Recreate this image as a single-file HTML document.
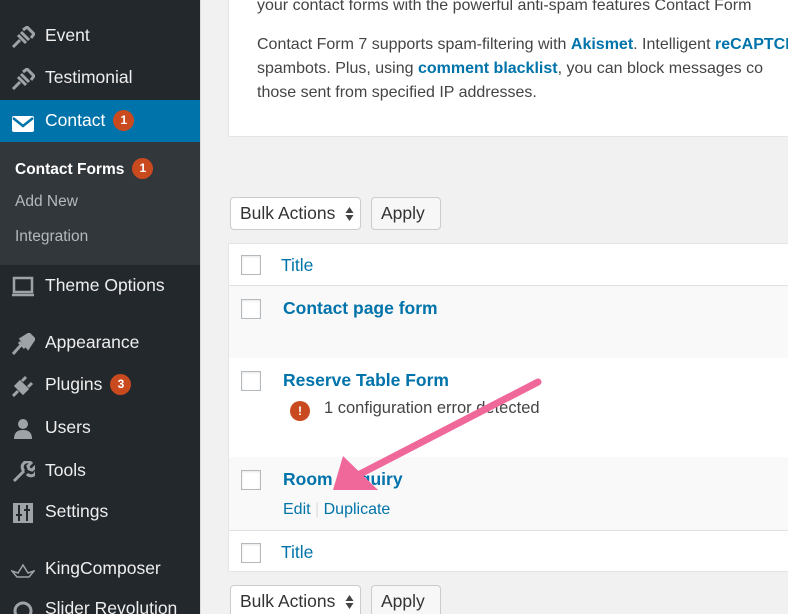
<!DOCTYPE html>
<html><head><style>
*{margin:0;padding:0;box-sizing:border-box}
html,body{width:788px;height:614px;overflow:hidden}
body{background:#f1f1f1;font-family:"Liberation Sans",sans-serif;position:relative}
#sb{position:absolute;left:0;top:0;width:200px;height:614px;background:#23282d;overflow:hidden}
.mi{position:absolute;left:0;width:200px;color:#eee;font-size:17.5px;white-space:nowrap}
.mi .t{position:absolute;left:45px;top:0}
.ic{position:absolute;left:11px;top:1px;width:24px;height:22px}
.badge{display:inline-block;width:21px;height:21px;border-radius:50%;background:#ca4a1f;color:#fff;font-size:12px;text-align:center;line-height:21px;vertical-align:2px;margin-left:8px;font-weight:bold}
#sub{position:absolute;left:0;top:142px;width:200px;height:123px;background:#32373c}
.si{position:absolute;left:15px;font-size:15.5px;color:#b4b9be}
.box{position:absolute;background:#fff}
.lnk{color:#0073aa;font-weight:bold}
p.d{position:absolute;left:257px;font-size:16px;color:#444;line-height:22px;white-space:nowrap}
.cb{position:absolute;left:241px;width:20px;height:20px;border:1px solid #b4b9be;background:#fff;box-shadow:inset 0 1px 2px rgba(0,0,0,.1)}
.tt{position:absolute;color:#0073aa;font-size:17.5px;white-space:nowrap}
.btn{position:absolute;height:33px;border:1px solid #ccc;border-radius:4px;font-size:17.5px;color:#333;line-height:31px;padding-left:9px;white-space:nowrap}
.ar{position:absolute;right:6px;top:9px}
</style></head><body>
<div id="sb">
 <div class="mi" style="top:25px"><svg class="ic" viewBox="0 0 24 22"><path d="M2 21l7-7M7 9l8 8M10 6l8 8M12 4l4-3 7 7-3 4" stroke="#9ea3a8" stroke-width="3" fill="none"/></svg><span class="t">Event</span></div>
 <div class="mi" style="top:67px"><svg class="ic" viewBox="0 0 24 22"><path d="M2 21l7-7M7 9l8 8M10 6l8 8M12 4l4-3 7 7-3 4" stroke="#9ea3a8" stroke-width="3" fill="none"/></svg><span class="t">Testimonial</span></div>
 <div style="position:absolute;top:100px;left:0;width:200px;height:42px;background:#0073aa"></div>
 <div style="position:absolute;left:190px;top:111px;width:0;height:0;border:10px solid transparent;border-right-color:#f1f1f1"></div>
 <div class="mi" style="top:110px;color:#fff"><svg class="ic" viewBox="0 0 24 22" style="top:3px"><rect x="1" y="3" width="22" height="16" rx="2" fill="#fff"/><path d="M2 5l10 8 10-8" stroke="#0073aa" stroke-width="2.5" fill="none"/></svg><span class="t">Contact<span class="badge">1</span></span></div>
 <div id="sub"></div>
 <div class="si" style="top:158px;color:#fff;font-weight:bold">Contact Forms<span class="badge">1</span></div>
 <div class="si" style="top:193px">Add New</div>
 <div class="si" style="top:228px">Integration</div>
 <div class="mi" style="top:275px"><svg class="ic" viewBox="0 0 24 22"><rect x="3" y="2" width="18" height="14" fill="none" stroke="#9ea3a8" stroke-width="2.5"/><path d="M1 19h22" stroke="#9ea3a8" stroke-width="2.5"/></svg><span class="t">Theme Options</span></div>
 <div class="mi" style="top:332px"><svg class="ic" viewBox="0 0 24 22"><path d="M2 21l8-9M8 9l6 6M10 6l8-5 5 5-6 9z" stroke="#9ea3a8" stroke-width="3" fill="#9ea3a8"/></svg><span class="t">Appearance</span></div>
 <div class="mi" style="top:374px"><svg class="ic" viewBox="0 0 24 22"><path d="M2 21l5-5M5 11l7 7 4-4-7-7zM11 6l4-4M17 12l4-4" stroke="#9ea3a8" stroke-width="3" fill="#9ea3a8"/></svg><span class="t">Plugins<span class="badge">3</span></span></div>
 <div class="mi" style="top:417px"><svg class="ic" viewBox="0 0 24 22"><circle cx="12" cy="6" r="5" fill="#9ea3a8"/><path d="M3 21c0-7 4-9 9-9s9 2 9 9z" fill="#9ea3a8"/></svg><span class="t">Users</span></div>
 <div class="mi" style="top:460px"><svg class="ic" viewBox="0 0 24 22"><path d="M3 20L13 10M13 10a5 5 0 0 1 7-8l-3 3 1 3 3 1 3-3a5 5 0 0 1-8 7" stroke="#9ea3a8" stroke-width="3" fill="none"/></svg><span class="t">Tools</span></div>
 <div class="mi" style="top:501px"><svg class="ic" viewBox="0 0 24 22"><rect x="2" y="1" width="20" height="20" fill="#9ea3a8"/><path d="M8 3v16M16 3v16M5 13h6M13 8h6" stroke="#23282d" stroke-width="2"/></svg><span class="t">Settings</span></div>
 <div class="mi" style="top:558px"><svg class="ic" viewBox="0 0 24 22"><path d="M1 12l5 6h12l5-6-6 2-5-8-5 8z" stroke="#9ea3a8" stroke-width="1.5" fill="none"/></svg><span class="t">KingComposer</span></div>
 <div class="mi" style="top:598px"><svg class="ic" viewBox="0 0 24 22"><circle cx="12" cy="12" r="8" stroke="#9ea3a8" stroke-width="3" fill="none"/></svg><span class="t">Slider Revolution</span></div>
</div>
<div style="position:absolute;left:200px;top:0;width:1px;height:614px;background:#ddd"></div>
<div class="box" style="left:228px;top:-2px;width:570px;height:139px;border:1px solid #e5e5e5"></div>
<p class="d" style="top:-5px">your contact forms with the powerful anti-spam features Contact Form</p>
<p class="d" style="top:34px">Contact Form 7 supports spam-filtering with <span class="lnk">Akismet</span>. Intelligent <span class="lnk">reCAPTCHA</span></p>
<p class="d" style="top:58px">spambots. Plus, using <span class="lnk">comment blacklist</span>, you can block messages co</p>
<p class="d" style="top:82px">those sent from specified IP addresses.</p>

<div class="btn" style="left:230px;top:197px;width:131px;background:#fff">Bulk Actions<svg class="ar" width="9" height="14"><path d="M0.5 6L4.5 0 8.5 6zM0.5 8L4.5 14 8.5 8z" fill="#444"/></svg></div>
<div class="btn" style="left:371px;top:197px;width:70px;background:#f7f7f7">Apply</div>

<div class="box" style="left:228px;top:243px;width:570px;height:329px;border:1px solid #e5e5e5"></div>
<div style="position:absolute;left:229px;top:285px;width:560px;height:73px;background:#f9f9f9;border-top:1px solid #e1e1e1"></div>
<div style="position:absolute;left:229px;top:457px;width:560px;height:73px;background:#f9f9f9"></div>
<div style="position:absolute;left:229px;top:530px;width:560px;height:1px;background:#e1e1e1"></div>
<div class="cb" style="top:255px"></div><div class="tt" style="left:281px;top:255px">Title</div>
<div class="cb" style="top:299px"></div><div class="tt" style="left:283px;top:298px;font-weight:bold">Contact page form</div>
<div class="cb" style="top:371px"></div><div class="tt" style="left:283px;top:370px;font-weight:bold">Reserve Table Form</div>
<div style="position:absolute;left:290px;top:401px;width:20px;height:20px;border-radius:50%;background:#ca4a1f;color:#fff;font-size:12px;font-weight:bold;text-align:center;line-height:20px">!</div>
<div style="position:absolute;left:324px;top:399px;font-size:16.5px;color:#444;white-space:nowrap">1 configuration error detected</div>
<div class="cb" style="top:470px"></div><div class="tt" style="left:283px;top:469px;font-weight:bold">Room Enquiry</div>
<div style="position:absolute;left:283px;top:501px;font-size:16px;color:#0073aa;white-space:nowrap">Edit <span style="color:#ddd">|</span> Duplicate</div>
<div class="cb" style="top:543px"></div><div class="tt" style="left:281px;top:542px">Title</div>

<div class="btn" style="left:230px;top:585px;width:131px;background:#fff">Bulk Actions<svg class="ar" width="9" height="14"><path d="M0.5 6L4.5 0 8.5 6zM0.5 8L4.5 14 8.5 8z" fill="#444"/></svg></div>
<div class="btn" style="left:371px;top:585px;width:70px;background:#f7f7f7">Apply</div>

<svg style="position:absolute;left:0;top:0" width="788" height="614"><path d="M538 382L360 474" stroke="#f0679a" stroke-width="7" stroke-linecap="round"/><path d="M333 490L343 456 378 490z" fill="#f0679a"/></svg>
</body></html>
